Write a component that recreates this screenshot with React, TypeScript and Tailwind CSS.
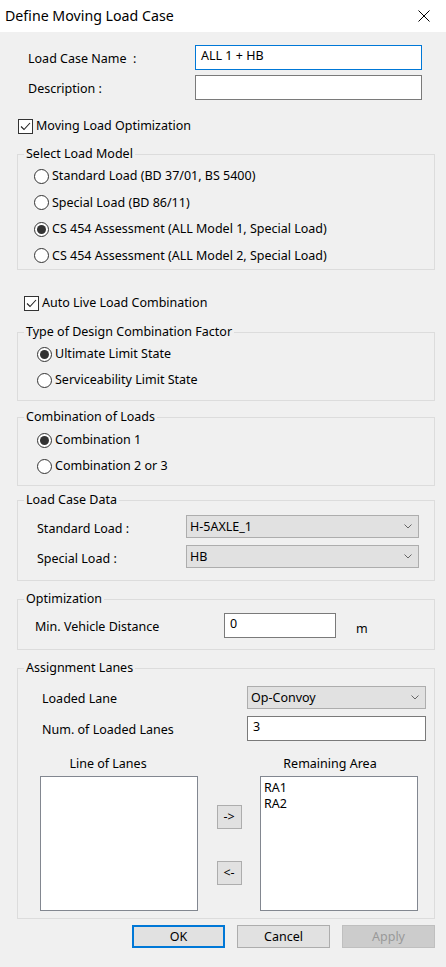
import type { ReactNode } from 'react'

const FONT = "font-['Segoe_UI','Noto_Sans',sans-serif]"

function Radio({ checked, label }: { checked?: boolean; label: string }) {
    return (
        <div className="flex items-center h-full">
            <span className="w-[15px] h-[15px] rounded-full border border-[#333] bg-white flex items-center justify-center shrink-0">
                {checked && <span className="w-[9px] h-[9px] rounded-full bg-[#333]" />}
            </span>
            <span className="ml-[3px]">{label}</span>
        </div>
    )
}

function Checkbox({ label }: { label: string }) {
    return (
        <div className="flex items-center h-[16px]">
            <span className="w-[15px] h-[15px] border border-[#333] bg-white flex items-center justify-center shrink-0">
                <svg width="11" height="9" viewBox="0 0 11 9">
                    <path d="M1 4.5 L4 7.5 L10 1" fill="none" stroke="#222" strokeWidth="1.1" />
                </svg>
            </span>
            <span className="ml-[3px]">{label}</span>
        </div>
    )
}

function Group({ title, className, children }: { title: string; className?: string; children: ReactNode }) {
    return (
        <fieldset className={`border border-[#dcdcdc] ${className ?? ''}`}>
            <legend className="ml-[6px] px-[2px] leading-[16px]">{title}</legend>
            {children}
        </fieldset>
    )
}

function Combo({ value, className }: { value: string; className: string }) {
    return (
        <div className={`h-[23px] bg-[#e1e1e1] border border-[#adadad] flex items-center justify-between pl-[3px] pr-[6px] ${className}`}>
            <span>{value}</span>
            <svg width="8" height="5" viewBox="0 0 8 5">
                <path d="M0.5 0.5 L4 4 L7.5 0.5" fill="none" stroke="#666" strokeWidth="1" />
            </svg>
        </div>
    )
}

function Field({ value, className }: { value?: string; className: string }) {
    return (
        <div className={`h-[25px] bg-white border border-[#7a7a7a] pl-[5px] pt-[2px] ${className}`}>
            {value}
        </div>
    )
}

function Button({ label, variant }: { label: string; variant?: 'default' | 'disabled' }) {
    const look =
        variant === 'default'
            ? 'border-2 border-[#0078d7] bg-[#e1e1e1]'
            : variant === 'disabled'
              ? 'border border-[#bfbfbf] bg-[#cccccc] text-[#999999]'
              : 'border border-[#adadad] bg-[#e1e1e1]'
    return (
        <div className={`w-[93px] h-[23px] shrink-0 flex items-center justify-center ${look}`}>{label}</div>
    )
}

export default function App() {
    return (
        <div className={`w-[446px] h-[967px] bg-[#f0f0f0] text-black text-[12.5px] leading-[16px] ${FONT}`}>
            {/* title bar */}
            <div className="h-[32px] bg-white flex items-center justify-between pl-[5px] pr-[16px]">
                <span className="text-[14.2px] leading-[20px]">Define Moving Load Case</span>
                <svg width="12" height="12" viewBox="0 0 12 12">
                    <path d="M0.5 0.5 L11.5 11.5 M11.5 0.5 L0.5 11.5" stroke="#000" strokeWidth="1" />
                </svg>
            </div>

            <div className="pl-[17px] pr-[11px]">
                <div className="mt-[13px] flex items-center">
                    <span className="w-[178px] pl-[11px] pt-[3px]">Load Case Name&nbsp;&nbsp;:</span>
                    <Field value="ALL 1 + HB" className="w-[227px] border-[#0078d7]" />
                </div>
                <div className="mt-[5px] flex items-center">
                    <span className="w-[178px] pl-[11px] pt-[3px]">Description :</span>
                    <Field className="w-[227px]" />
                </div>

                <div className="mt-[18px] ml-[1px]">
                    <Checkbox label="Moving Load Optimization" />
                </div>

                <Group title="Select Load Model" className="mt-[12px]">
                    <div className="pl-[16px] pt-[1px]">
                        <div className="h-[26px]"><Radio label="Standard Load (BD 37/01, BS 5400)" /></div>
                        <div className="h-[27px]"><Radio label="Special Load (BD 86/11)" /></div>
                        <div className="h-[26px]"><Radio checked label="CS 454 Assessment (ALL Model 1, Special Load)" /></div>
                        <div className="h-[27px]"><Radio label="CS 454 Assessment (ALL Model 2, Special Load)" /></div>
                    </div>
                </Group>

                <div className="mt-[25px] ml-[7px]">
                    <Checkbox label="Auto Live Load Combination" />
                </div>

                <Group title="Type of Design Combination Factor" className="mt-[13px]">
                    <div className="pl-[19px] pt-[1px] pb-[7px]">
                        <div className="h-[26px]"><Radio checked label="Ultimate Limit State" /></div>
                        <div className="h-[26px]"><Radio label="Serviceability Limit State" /></div>
                    </div>
                </Group>

                <Group title="Combination of Loads" className="mt-[8px]">
                    <div className="pl-[19px] pt-[2px] pb-[6px]">
                        <div className="h-[26px]"><Radio checked label="Combination 1" /></div>
                        <div className="h-[26px]"><Radio label="Combination 2 or 3" /></div>
                    </div>
                </Group>

                <Group title="Load Case Data" className="mt-[6px]">
                    <div className="pt-[7px] pb-[12px]">
                        <div className="flex items-center">
                            <span className="w-[168px] pl-[19px] pt-[4px]">Standard Load :</span>
                            <Combo value="H-5AXLE_1" className="w-[233px]" />
                        </div>
                        <div className="flex items-center mt-[7px]">
                            <span className="w-[168px] pl-[19px] pt-[4px]">Special Load :</span>
                            <Combo value="HB" className="w-[233px]" />
                        </div>
                    </div>
                </Group>

                <Group title="Optimization" className="mt-[10px]">
                    <div className="pt-[6px] pb-[11px] flex items-center">
                        <span className="w-[206px] pl-[17px] pt-[2px]">Min. Vehicle Distance</span>
                        <Field value="0" className="w-[112px]" />
                        <span className="ml-[20px] pt-[6px]">m</span>
                    </div>
                </Group>

                <Group title="Assignment Lanes" className="mt-[10px]">
                    <div className="pt-[10px] pb-[7px]">
                        <div className="flex items-center">
                            <span className="w-[229px] pl-[24px] pt-[3px]">Loaded Lane</span>
                            <Combo value="Op-Convoy" className="w-[179px]" />
                        </div>
                        <div className="flex items-center mt-[7px]">
                            <span className="w-[229px] pl-[24px] pt-[3px]">Num. of Loaded Lanes</span>
                            <Field value="3" className="w-[179px]" />
                        </div>
                        <div className="flex mt-[15px] pl-[22px]">
                            <div className="w-[158px] flex flex-col items-center">
                                <span className="mr-[22px]">Line of Lanes</span>
                                <div className="mt-[4px] w-[158px] h-[135px] bg-white border border-[#828790]" />
                            </div>
                            <div className="w-[62px] flex flex-col items-center pt-[49px]">
                                <div className="w-[25px] h-[24px] bg-[#e1e1e1] border border-[#adadad] flex items-center justify-center">-&gt;</div>
                                <div className="mt-[32px] w-[25px] h-[24px] bg-[#e1e1e1] border border-[#adadad] flex items-center justify-center">&lt;-</div>
                            </div>
                            <div className="w-[158px] flex flex-col items-center">
                                <span className="mr-[18px]">Remaining Area</span>
                                <div className="mt-[4px] w-[158px] h-[135px] bg-white border border-[#828790] pl-[3px] pt-[3px]">
                                    <div>RA1</div>
                                    <div>RA2</div>
                                </div>
                            </div>
                        </div>
                    </div>
                </Group>

                <div className="mt-[6px] flex justify-end gap-[12px]">
                    <Button label="OK" variant="default" />
                    <Button label="Cancel" />
                    <Button label="Apply" variant="disabled" />
                </div>
            </div>
        </div>
    )
}
